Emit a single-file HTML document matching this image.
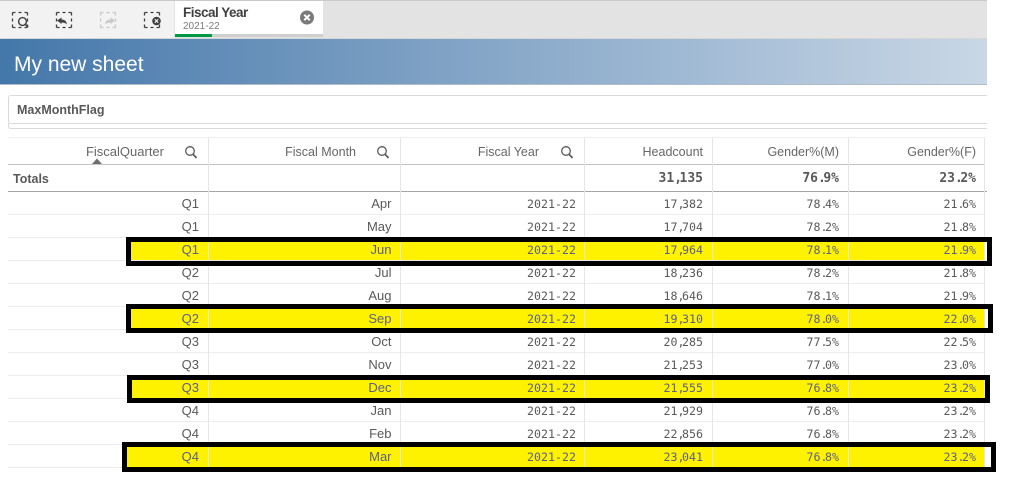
<!DOCTYPE html>
<html><head><meta charset="utf-8"><style>
html,body{margin:0;padding:0;background:#fff}
body{width:1010px;height:479px;overflow:hidden;position:relative;font-family:"Liberation Sans",sans-serif;color:#595959}
.a{position:absolute}
.t{position:absolute;white-space:nowrap;text-align:right;line-height:16px;font-size:13px}
.m{font-family:"DejaVu Sans Mono",monospace;font-size:11.63px}
.m i{font-style:normal;letter-spacing:-2.5px}
.b{font-weight:bold;font-size:13px}
.hl{position:absolute;background:#fff200}
.bx{position:absolute;border:5px solid #000;box-sizing:border-box}
.l{position:absolute;background:#ececec}
.y{position:absolute;width:1px;background:#e6e6e6;top:137px;height:330px}
.row{position:absolute;left:0;top:0;width:1010px;height:23px}
.row .t{top:4px}
.row.h .t{color:#5a5f8e}
.c1{right:811px}.c2{right:618.5px}.c3{right:434px}.c4{right:307px}.c5{right:171px}.c6{right:34px}
.hd{top:144px;font-size:12.5px;color:#666}
</style></head><body>
<div class="a" style="left:0;top:0;width:987px;height:39px;background:#e3e3e3;border-top:1px solid #c9c9c9;box-sizing:border-box"></div>
<div class="a" style="left:0;top:1px;width:174px;height:38px;background:#f2f2f2"></div>
<div class="a" style="left:175px;top:1px;width:148px;height:33px;background:#fff"></div>
<div class="a" style="left:0;top:38px;width:987px;height:1px;background:#d6d6d6"></div>
<div class="a" style="left:175px;top:34px;width:148px;height:3px;background:linear-gradient(90deg,#009845 25%,#cfcfcf 25%)"></div>

<svg class="a" style="left:0;top:0" width="170" height="38" fill="none">
<g stroke="#404040" stroke-width="1.3" stroke-dasharray="3 3">
<path d="M12.5 12.5H27.5M27.5 12.5V27.5M27.5 27.5H12.5M12.5 27.5V12.5"/>
<path d="M56.5 12.5H71.5M71.5 12.5V27.5M71.5 27.5H56.5M56.5 27.5V12.5"/>
<path d="M144.5 12.5H159.5M159.5 12.5V27.5M159.5 27.5H144.5M144.5 27.5V12.5"/>
</g>
<path d="M100.5 12.5H115.5M115.5 12.5V27.5M115.5 27.5H100.5M100.5 27.5V12.5" stroke="#c8c8c8" stroke-width="1.3" stroke-dasharray="3 3"/>
<circle cx="22.5" cy="21.5" r="3.9" stroke="#404040" stroke-width="1.4"/>
<path d="M25.3 24.3L28 27" stroke="#404040" stroke-width="1.7"/>
<path d="M57 20.5L61.5 17.5V19.5C64.5 19.5 66.5 21 67 24.5C65.5 23 64 22.5 61.5 22.5V24Z" fill="#404040"/>
<path d="M115 20.5L110.5 17.5V19.5C107.5 19.5 105.5 21 105 24.5C106.5 23 108 22.5 110.5 22.5V24Z" fill="#c8c8c8"/>
<circle cx="156.5" cy="21" r="4.3" fill="#404040"/>
<path d="M154.8 19.3L158.2 22.7M158.2 19.3L154.8 22.7" stroke="#f2f2f2" stroke-width="1.1"/>
</svg>

<div class="a" style="left:183px;top:4px;font-size:13.5px;line-height:17px;font-weight:bold;color:#404040;letter-spacing:-.5px;white-space:nowrap">Fiscal Year</div>
<div class="a" style="left:183px;top:20px;font-size:10px;line-height:13px;color:#7b7b7b;white-space:nowrap">2021-22</div>
<svg class="a" style="left:300px;top:10px" width="15" height="15"><circle cx="7" cy="7.5" r="7" fill="#7a7a7a"/><path d="M4.3 4.8L9.7 10.2M9.7 4.8L4.3 10.2" stroke="#fff" stroke-width="2"/></svg>

<div class="a" style="left:0;top:39px;width:987px;height:46px;background:linear-gradient(90deg,#4477aa 0%,#c9d7e6 100%);border-bottom:1px solid #b0bdcb;box-sizing:border-box"></div>
<div class="a" style="left:14px;top:51px;font-size:21px;line-height:27px;color:#fff;white-space:nowrap">My new sheet</div>

<div class="a" style="left:8px;top:95px;width:979px;height:29px;border:1px solid #d9d9d9;border-right:0;border-radius:3px 0 0 3px;box-sizing:border-box"></div>
<div class="a" style="left:8px;top:123px;width:979px;height:6px;border-bottom:1px solid #d9d9d9;border-left:1px solid #d9d9d9;border-radius:0 0 0 3px;box-sizing:border-box"></div>
<div class="a b" style="left:17px;top:102px;line-height:16px;font-size:12.5px;color:#595959;white-space:nowrap">MaxMonthFlag</div>

<!-- yellow rows -->
<div class="hl" style="left:131px;top:242px;width:853px;height:18px"></div>
<div class="hl" style="left:131px;top:309px;width:853px;height:19px"></div>
<div class="hl" style="left:132px;top:380px;width:852px;height:18px"></div>
<div class="hl" style="left:127px;top:447px;width:857px;height:20px"></div>

<!-- grid -->
<div class="l" style="left:8px;top:137px;width:977px;height:1px;background:#eee"></div>
<div class="l" style="left:8px;top:164px;width:977px;height:1px;background:#c4c4c4"></div>
<div class="l" style="left:8px;top:191px;width:979px;height:1px;background:#a6a6a6"></div>
<div class="l" style="left:8px;top:214px;width:977px;height:1px"></div>
<div class="l" style="left:8px;top:237px;width:977px;height:1px"></div>
<div class="l" style="left:8px;top:260px;width:977px;height:1px"></div>
<div class="l" style="left:8px;top:283px;width:977px;height:1px"></div>
<div class="l" style="left:8px;top:306px;width:977px;height:1px"></div>
<div class="l" style="left:8px;top:329px;width:977px;height:1px"></div>
<div class="l" style="left:8px;top:352px;width:977px;height:1px"></div>
<div class="l" style="left:8px;top:375px;width:977px;height:1px"></div>
<div class="l" style="left:8px;top:398px;width:977px;height:1px"></div>
<div class="l" style="left:8px;top:421px;width:977px;height:1px"></div>
<div class="l" style="left:8px;top:444px;width:977px;height:1px"></div>
<div class="l" style="left:8px;top:467px;width:977px;height:1px"></div>
<div class="y" style="left:208px"></div>
<div class="y" style="left:400px"></div>
<div class="y" style="left:584px"></div>
<div class="y" style="left:712px"></div>
<div class="y" style="left:848px"></div>
<div class="y" style="left:984px"></div>

<!-- header -->
<div class="t hd" style="right:846px;font-size:13px">FiscalQuarter</div>
<div class="t hd" style="right:654px">Fiscal Month</div>
<div class="t hd" style="right:471px">Fiscal Year</div>
<div class="t hd c4">Headcount</div>
<div class="t hd c5">Gender%(M)</div>
<div class="t hd c6">Gender%(F)</div>
<svg class="a" style="left:0;top:0" width="600" height="170" fill="none" stroke="#595959">
<circle cx="190" cy="151" r="4.3" stroke-width="1.3"/><path d="M193 154.2L196.6 158" stroke-width="1.7"/>
<circle cx="382" cy="151" r="4.3" stroke-width="1.3"/><path d="M385 154.2L388.6 158" stroke-width="1.7"/>
<circle cx="566" cy="151" r="4.3" stroke-width="1.3"/><path d="M569 154.2L572.6 158" stroke-width="1.7"/>
<path d="M92 164L97 158.5L102 164Z" fill="#6e6e6e" stroke="none"/>
</svg>

<!-- totals -->
<div class="t b" style="left:13px;top:171px;font-size:12.5px">Totals</div>
<div class="t b m c4" style="top:171px">31<i>,</i>135</div>
<div class="t b m c5" style="top:171px">76<i>.</i>9%</div>
<div class="t b m c6" style="top:171px">23<i>.</i>2%</div>

<!-- rows -->
<div class="row" style="top:192px"><div class="t c1">Q1</div><div class="t c2">Apr</div><div class="t m c3">2021-22</div><div class="t m c4">17<i>,</i>382</div><div class="t m c5">78<i>.</i>4%</div><div class="t m c6">21<i>.</i>6%</div></div>
<div class="row" style="top:215px"><div class="t c1">Q1</div><div class="t c2">May</div><div class="t m c3">2021-22</div><div class="t m c4">17<i>,</i>704</div><div class="t m c5">78<i>.</i>2%</div><div class="t m c6">21<i>.</i>8%</div></div>
<div class="row h" style="top:238px"><div class="t c1">Q1</div><div class="t c2">Jun</div><div class="t m c3">2021-22</div><div class="t m c4">17<i>,</i>964</div><div class="t m c5">78<i>.</i>1%</div><div class="t m c6">21<i>.</i>9%</div></div>
<div class="row" style="top:261px"><div class="t c1">Q2</div><div class="t c2">Jul</div><div class="t m c3">2021-22</div><div class="t m c4">18<i>,</i>236</div><div class="t m c5">78<i>.</i>2%</div><div class="t m c6">21<i>.</i>8%</div></div>
<div class="row" style="top:284px"><div class="t c1">Q2</div><div class="t c2">Aug</div><div class="t m c3">2021-22</div><div class="t m c4">18<i>,</i>646</div><div class="t m c5">78<i>.</i>1%</div><div class="t m c6">21<i>.</i>9%</div></div>
<div class="row h" style="top:307px"><div class="t c1">Q2</div><div class="t c2">Sep</div><div class="t m c3">2021-22</div><div class="t m c4">19<i>,</i>310</div><div class="t m c5">78<i>.</i>0%</div><div class="t m c6">22<i>.</i>0%</div></div>
<div class="row" style="top:330px"><div class="t c1">Q3</div><div class="t c2">Oct</div><div class="t m c3">2021-22</div><div class="t m c4">20<i>,</i>285</div><div class="t m c5">77<i>.</i>5%</div><div class="t m c6">22<i>.</i>5%</div></div>
<div class="row" style="top:353px"><div class="t c1">Q3</div><div class="t c2">Nov</div><div class="t m c3">2021-22</div><div class="t m c4">21<i>,</i>253</div><div class="t m c5">77<i>.</i>0%</div><div class="t m c6">23<i>.</i>0%</div></div>
<div class="row h" style="top:376px"><div class="t c1">Q3</div><div class="t c2">Dec</div><div class="t m c3">2021-22</div><div class="t m c4">21<i>,</i>555</div><div class="t m c5">76<i>.</i>8%</div><div class="t m c6">23<i>.</i>2%</div></div>
<div class="row" style="top:399px"><div class="t c1">Q4</div><div class="t c2">Jan</div><div class="t m c3">2021-22</div><div class="t m c4">21<i>,</i>929</div><div class="t m c5">76<i>.</i>8%</div><div class="t m c6">23<i>.</i>2%</div></div>
<div class="row" style="top:422px"><div class="t c1">Q4</div><div class="t c2">Feb</div><div class="t m c3">2021-22</div><div class="t m c4">22<i>,</i>856</div><div class="t m c5">76<i>.</i>8%</div><div class="t m c6">23<i>.</i>2%</div></div>
<div class="row h" style="top:445px"><div class="t c1">Q4</div><div class="t c2">Mar</div><div class="t m c3">2021-22</div><div class="t m c4">23<i>,</i>041</div><div class="t m c5">76<i>.</i>8%</div><div class="t m c6">23<i>.</i>2%</div></div>

<!-- black boxes -->
<div class="bx" style="left:126px;top:237px;width:866px;height:29px"></div>
<div class="bx" style="left:126px;top:304px;width:867px;height:29px"></div>
<div class="bx" style="left:127px;top:375px;width:863px;height:28px"></div>
<div class="bx" style="left:122px;top:442px;width:874px;height:30px"></div>
</body></html>
